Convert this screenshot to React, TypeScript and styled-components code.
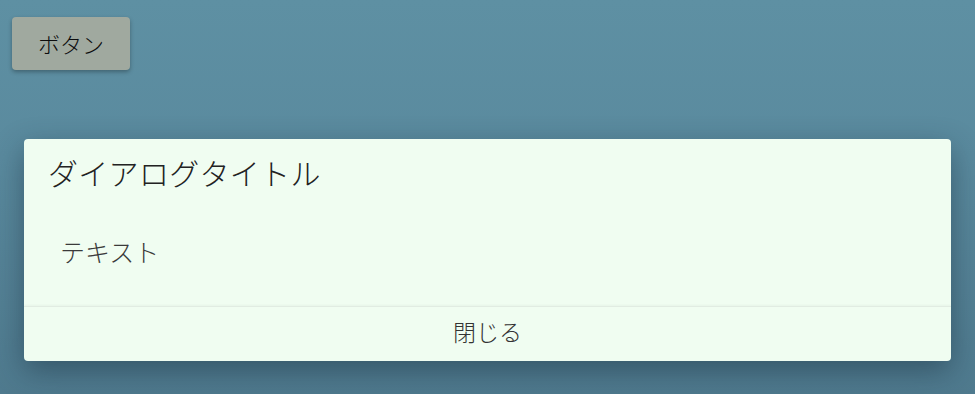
import React from 'react'
import styled, { createGlobalStyle } from 'styled-components'

const GlobalStyle = createGlobalStyle`
  html, body {
    margin: 0;
    padding: 0;
    background: #5d8ea1;
    font-family: "Noto Sans CJK JP", "Noto Sans", sans-serif;
  }
`

const Page = styled.div`
  min-height: 394px;
  box-sizing: border-box;
  padding: 17px 24px 0 12px;
  background: linear-gradient(180deg, #5e90a3 0%, #5a8a9e 40%, #4f7a8e 100%);
`

const Button = styled.button`
  display: block;
  width: 118px;
  height: 53px;
  padding: 0 0 2px;
  border: none;
  border-radius: 4px;
  background: #a0a99f;
  color: #0d0d0d;
  font-family: inherit;
  font-size: 22px;
  font-weight: 300;
  box-shadow: 0 2px 4px rgba(0, 0, 0, 0.3);
  cursor: pointer;
`

const Dialog = styled.div`
  margin: 69px 0 0 12px;
  height: 222px;
  border-radius: 4px;
  background: #f0fdf1;
  box-shadow: 0 10px 30px rgba(20, 40, 55, 0.45);
  display: flex;
  flex-direction: column;
  overflow: hidden;
`

const Title = styled.h2`
  margin: 0;
  padding: 12px 24px 0;
  height: 52px;
  font-size: 30px;
  font-weight: 300;
  color: #222;
  line-height: 42px;
  letter-spacing: 0.3px;
`

const Body = styled.div`
  flex: 1;
  padding: 32px 36px 0;
  font-size: 25px;
  font-weight: 300;
  color: #3a3a3a;
  line-height: 32px;
`

const Footer = styled.div`
  height: 54px;
  border-top: 1px solid #e1ece2;
  box-shadow: 0 -1px 2px rgba(0, 0, 0, 0.04);
  display: flex;
  align-items: center;
  justify-content: center;
`

const CloseButton = styled.button`
  border: none;
  background: none;
  padding: 0 0 7px;
  font-family: inherit;
  font-size: 23px;
  font-weight: 300;
  color: #333;
  cursor: pointer;
`

export default function App() {
  return (
    <>
      <GlobalStyle />
      <Page>
        <Button>ボタン</Button>
        <Dialog role="dialog">
          <Title>ダイアログタイトル</Title>
          <Body>テキスト</Body>
          <Footer>
            <CloseButton>閉じる</CloseButton>
          </Footer>
        </Dialog>
      </Page>
    </>
  )
}
